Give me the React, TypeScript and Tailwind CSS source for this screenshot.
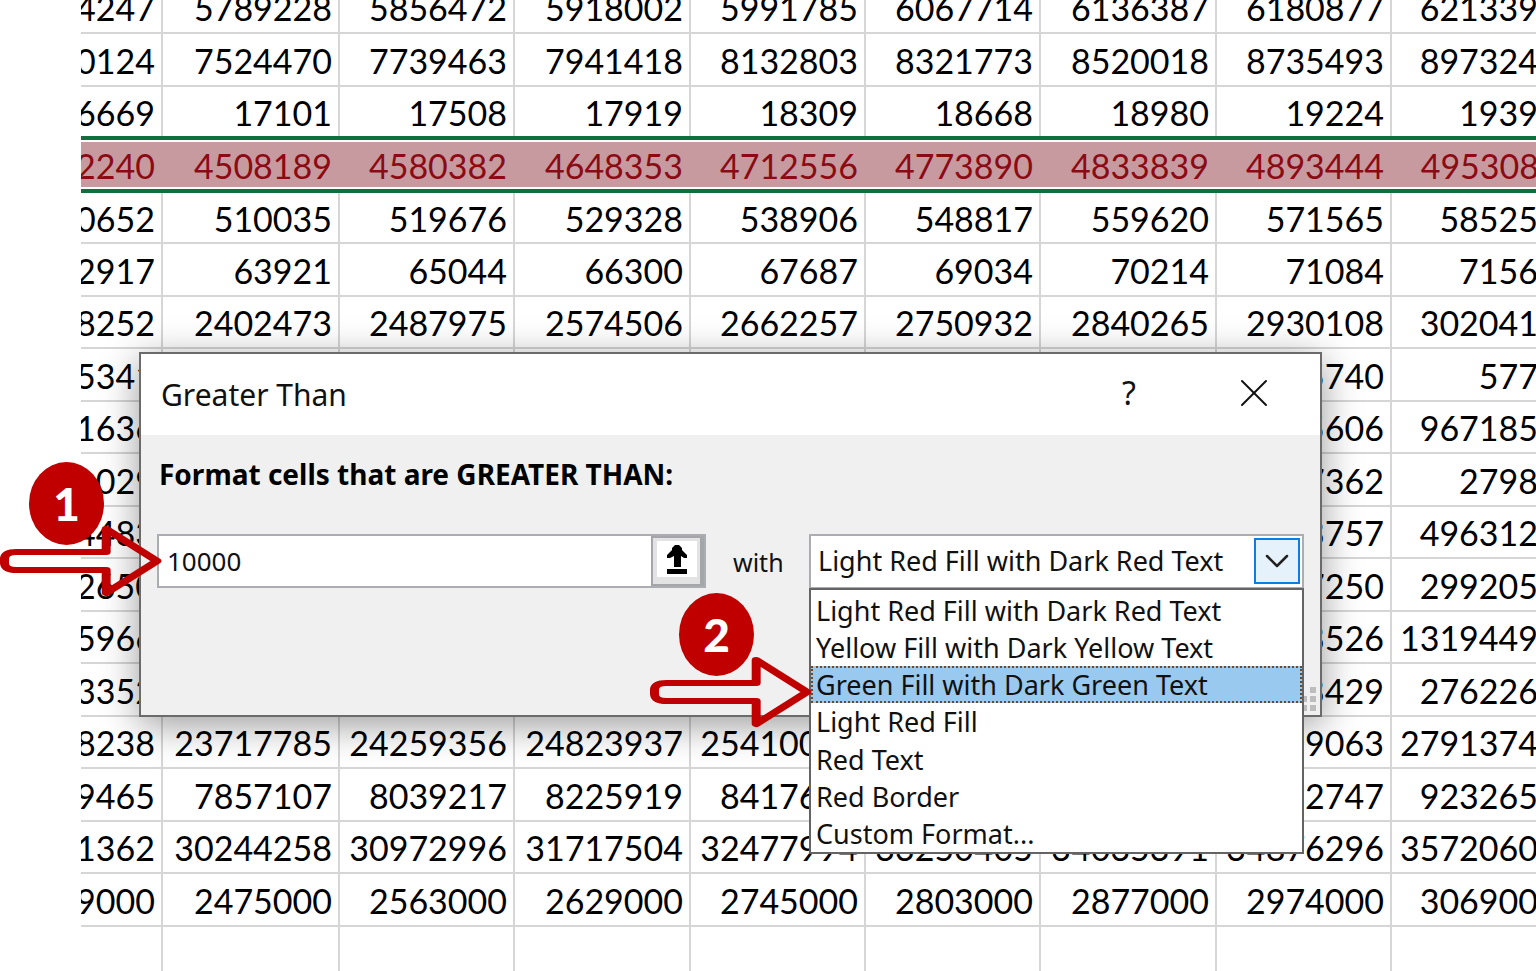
import { ChevronDown, X } from "lucide-react";

const rows = [
  ["4247", "5789228", "5856472", "5918002", "5991785", "6067714", "6136387", "6180877", "621339"],
  ["0124", "7524470", "7739463", "7941418", "8132803", "8321773", "8520018", "8735493", "897324"],
  ["6669", "17101", "17508", "17919", "18309", "18668", "18980", "19224", "1939"],
  ["2240", "4508189", "4580382", "4648353", "4712556", "4773890", "4833839", "4893444", "495308"],
  ["0652", "510035", "519676", "529328", "538906", "548817", "559620", "571565", "58525"],
  ["2917", "63921", "65044", "66300", "67687", "69034", "70214", "71084", "7156"],
  ["8252", "2402473", "2487975", "2574506", "2662257", "2750932", "2840265", "2930108", "302041"],
  ["5341", "", "", "", "", "", "", "5740", "577"],
  ["1636", "", "", "", "", "", "", "5606", "967185"],
  ["029", "", "", "", "", "", "", "7362", "2798"],
  ["4483", "", "", "", "", "", "", "3757", "496312"],
  ["2650", "", "", "", "", "", "", "7250", "299205"],
  ["5966", "", "", "", "", "", "", "3526", "1319449"],
  ["3352", "", "", "", "", "", "", "3429", "276226"],
  ["8238", "23717785", "24259356", "24823937", "25410000", "", "", "9063", "2791374"],
  ["9465", "7857107", "8039217", "8225919", "8417600", "", "", "2747", "923265"],
  ["1362", "30244258", "30972996", "31717504", "32477994", "33250405", "34035391", "34876296", "3572060"],
  ["9000", "2475000", "2563000", "2629000", "2745000", "2803000", "2877000", "2974000", "306900"],
  ["", "", "", "", "", "", "", "", ""],
];

const SELECTED_ROW = 3;

const formats = [
  "Light Red Fill with Dark Red Text",
  "Yellow Fill with Dark Yellow Text",
  "Green Fill with Dark Green Text",
  "Light Red Fill",
  "Red Text",
  "Red Border",
  "Custom Format...",
];

function Sheet() {
  return (
    <div className="ml-[81px] h-full overflow-hidden">
      <table className="-mt-5 w-[calc(100%+4px)] table-fixed border-collapse font-['Lato',sans-serif] text-[34px] leading-none text-black">
        <colgroup>
          <col className="w-[81px]" />
          <col className="w-[177px]" />
          <col className="w-[175px]" />
          <col className="w-[176px]" />
          <col className="w-[175px]" />
          <col className="w-[175px]" />
          <col className="w-[176px]" />
          <col className="w-[175px]" />
          <col />
        </colgroup>
        <tbody>
          {rows.map((cells, r) => {
            const selected = r === SELECTED_ROW;

            return (
              <tr key={r} className="odd:h-[52px] even:h-[53px]">
                {cells.map((value, c) => (
                  <td
                    key={c}
                    className={
                      selected
                        ? "border-y-4 border-[#126e3c] bg-[#c79aa0] p-0 pt-[2px] pr-[7px] text-[#8c0a14] shadow-[inset_0_2px_0_#fff,inset_0_-2px_0_#fff] last:pr-0"
                        : "border-2 border-[#d6d6d6] p-0 pt-[2px] pr-[6px] first:border-l-0 last:pr-0"
                    }
                  >
                    <div className="flex justify-end">{value}</div>
                  </td>
                ))}
              </tr>
            );
          })}
        </tbody>
      </table>
    </div>
  );
}

function FormatPicker() {
  return (
    <div className="relative w-[495px]">
      <select
        aria-label="Format"
        defaultValue={formats[0]}
        className="h-[55px] w-full appearance-none border-2 border-[#abadb3] bg-white pl-[7px] text-[27px] text-[#111]"
      >
        {formats.map((name) => (
          <option key={name}>{name}</option>
        ))}
      </select>
      <button
        type="button"
        aria-label="Show formats"
        className="absolute top-1 right-1 flex h-[46px] w-[46px] items-center justify-center border-2 border-[#0a7fe0] bg-[#e5f1fb]"
      >
        <ChevronDown className="h-10 w-10 shrink-0 text-[#222]" strokeWidth={1.5} />
      </button>

      {/* Open list */}
      <ul
        role="listbox"
        aria-label="Formats"
        className="absolute top-[54px] left-0 flex h-[266px] w-full flex-col border-2 border-[#646464] bg-white pt-[2px] text-[27px] leading-none text-[#111]"
      >
        {formats.map((name, i) => (
          <li
            key={name}
            role="option"
            aria-selected={i === 2}
            className={
              i === 2
                ? "flex flex-1 items-center bg-[#99c9ef] pl-[5px] outline-2 -outline-offset-2 outline-[#6b4a2e] outline-dotted"
                : "flex flex-1 items-center pl-[5px]"
            }
          >
            {name}
          </li>
        ))}
      </ul>
    </div>
  );
}

function GreaterThanDialog() {
  return (
    <div
      role="dialog"
      aria-labelledby="dialog-title"
      className="absolute top-[352px] left-[139px] h-[365px] w-[1183px] border-2 border-[#6b6b6b] bg-[#f0f0f0] font-['Noto_Sans',sans-serif] text-[#111] shadow-[0_8px_36px_rgba(0,0,0,0.4)]"
    >
      <header className="flex h-[81px] items-center bg-white pr-[50px] pl-5">
        <h1 id="dialog-title" className="flex-1 text-[30px]">
          Greater Than
        </h1>
        <button type="button" aria-label="Help" className="mr-[102px] pb-1 text-[32px]">
          ?
        </button>
        <button type="button" aria-label="Close" className="pb-1">
          <X className="-m-2 h-12 w-12" strokeWidth={1} />
        </button>
      </header>

      {/* Resize grip */}
      <svg viewBox="0 0 15 24" className="absolute right-1 bottom-1 h-6 w-[15px] fill-[#bdbdbd]">
        <path d="M9 0h6v6H9zM9 9h6v6H9zM9 18h6v6H9zM0 9h6v6H0zM0 18h6v6H0z" />
      </svg>

      <div className="pt-[19px] pr-4 pl-4">
        <label htmlFor="threshold" className="block pl-[2px] text-[28px] leading-10 font-bold text-black">
          Format cells that are GREATER THAN:
        </label>
        <div className="mt-10 flex items-start">
          <div className="flex h-[54px] w-[549px] border-2 border-[#abadb3] bg-white">
            <input
              id="threshold"
              defaultValue="10000"
              className="min-w-0 flex-1 pl-2 text-[26px] outline-none"
            />
            <button
              type="button"
              aria-label="Collapse dialog"
              className="flex w-[53px] items-center justify-center border-2 border-r-4 border-[#a5a6aa] bg-[#e3e3e3] pb-1"
            >
              <span className="flex h-9 w-10 items-center justify-center bg-white">
                <svg viewBox="0 0 20 29" className="h-[29px] w-5">
                  <path d="M8 0h4l3 3v2l5 5v3h-3l-3-2v11H7V11l-4 2H0v-3l5-5V3zM0 24h20v5H0z" />
                </svg>
              </span>
            </button>
          </div>
          <span className="ml-[27px] flex-1 text-[25px] leading-[56px]">with</span>
          <FormatPicker />
        </div>
      </div>
    </div>
  );
}

function Arrow() {
  return (
    <svg
      viewBox="0 0 109 72"
      preserveAspectRatio="none"
      className="h-[72px] w-[163px] fill-none stroke-[#c00000]"
      strokeWidth={6}
      strokeLinejoin="round"
    >
      <path d="M71 27V4l34 32-34 32V45H11C6 45 3 43 3 38v-4c0-5 3-7 8-7z" />
    </svg>
  );
}

function Badge({ children }: { children: string }) {
  return (
    <div className="flex h-[83px] w-[75px] items-center justify-center rounded-[50%] bg-[#c00000] font-['Lato',sans-serif] text-[46px] leading-none font-black text-white">
      {children}
    </div>
  );
}

export default function App() {
  return (
    <main className="relative h-screen overflow-hidden bg-white">
      <Sheet />
      <GreaterThanDialog />

      {/* Step callouts */}
      <div className="absolute top-[462px] left-[29px]">
        <Badge>1</Badge>
      </div>
      <div className="absolute top-[525px] left-0">
        <Arrow />
      </div>
      <div className="absolute top-[593px] left-[679px]">
        <Badge>2</Badge>
      </div>
      <div className="absolute top-[656px] left-[650px]">
        <Arrow />
      </div>
    </main>
  );
}
